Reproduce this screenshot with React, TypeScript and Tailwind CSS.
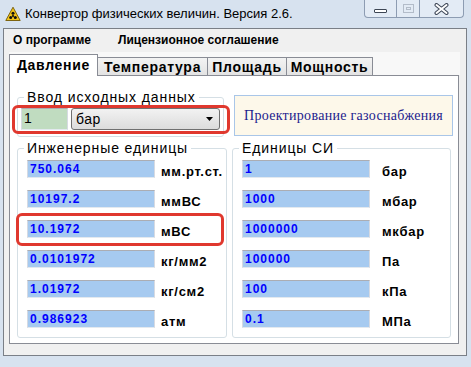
const SANS = "font-['Liberation_Sans',Arial,sans-serif]";

const engRows = [
  ["750.064", "мм.рт.ст."],
  ["10197.2", "ммВС"],
  ["10.1972", "мВС"],
  ["0.0101972", "кг/мм2"],
  ["1.01972", "кг/см2"],
  ["0.986923", "атм"],
];

const siRows = [
  ["1", "бар"],
  ["1000", "мбар"],
  ["1000000", "мкбар"],
  ["100000", "Па"],
  ["100", "кПа"],
  ["0.1", "МПа"],
];

const AppIcon = () => (
  <svg width="16" height="16" viewBox="0 0 16 16">
    <path d="M8 1.2 L15.2 14.5 L0.8 14.5 Z" fill="#f4c51a" stroke="#7d6410" strokeWidth="1" strokeLinejoin="round" />
    <circle cx="8" cy="10" r="1.1" fill="#111" />
    <circle cx="8" cy="7.3" r="1.5" fill="#111" />
    <circle cx="5.7" cy="11.5" r="1.5" fill="#111" />
    <circle cx="10.3" cy="11.5" r="1.5" fill="#111" />
  </svg>
);

const TitleButtons = () => (
  <div className="flex h-[18px] self-start rounded-b-[4px] border border-t-0 border-[#8d9cb2] bg-[#e3ebf5]">
    <div className="flex w-[32px] items-center justify-center border-r border-[#8d9cb2]">
      <div className="mt-[5px] h-[4px] w-[13px] rounded-[1px] border border-[#3d4654] bg-white" />
    </div>
    <div className="flex w-[23px] items-center justify-center border-r border-[#8d9cb2]">
      <div className="flex h-[9px] w-[11px] items-center justify-center border border-[#b3bcc9]">
        <div className="h-[3px] w-[5px] border border-[#b3bcc9]" />
      </div>
    </div>
    <div className="flex w-[43px] items-center justify-center">
      <svg width="15" height="12" viewBox="0 0 15 12">
        <path d="M2.5 2 L12.5 10 M12.5 2 L2.5 10" stroke="#3e4757" strokeWidth="4" strokeLinecap="round" />
        <path d="M2.5 2 L12.5 10 M12.5 2 L2.5 10" stroke="#ffffff" strokeWidth="2" strokeLinecap="round" />
      </svg>
    </div>
  </div>
);

const ValueBox = ({ value }: { value: string }) => (
  <div className="h-[18px] w-[128px] border border-t-[#abadb3] border-x-[#d6dae2] border-b-[#e3e9ef] bg-[#a6caf0] pl-[2px] text-[12px] font-bold leading-[16px] tracking-[1px] text-[#0000ff]">
    {value}
  </div>
);

const Group = ({ title, rows, gap, width }: { title: string; rows: string[][]; gap: string; width: string }) => (
  <fieldset className={`${width} rounded-[3px] border border-[#d5dfe5] px-[3px]`}>
    <legend className="ml-[3px] px-[3px] text-[14px] leading-[16px] tracking-[0.9px] text-black">{title}</legend>
    <div className="flex flex-col gap-[12px] pl-[6px] pt-[4px] pb-[9px]">
      {rows.map(([v, u]) => (
        <div key={u} className="flex h-[18px] items-start">
          <ValueBox value={v} />
          <span className={`${gap} pt-[4px] text-[13px] font-bold leading-[16px] tracking-[0.7px] text-black`}>{u}</span>
        </div>
      ))}
    </div>
  </fieldset>
);

const tabs = [
  { label: "Давление", w: "w-[89px]", active: true },
  { label: "Температура", w: "w-[111px]", active: false },
  { label: "Площадь", w: "w-[80px]", active: false },
  { label: "Мощность", w: "w-[87px]", active: false },
];

export default function App() {
  return (
    <div className={`${SANS} flex h-[367px] w-[471px] flex-col overflow-hidden bg-[#d7e2ef]`}>
      {/* title bar */}
      <div className="flex h-[28px] flex-shrink-0 items-center pl-[5px] pr-[7px]">
        <AppIcon />
        <span className="ml-[4px] text-[13px] text-black">Конвертор физических величин. Версия 2.6.</span>
        <div className="flex-1" />
        <TitleButtons />
      </div>

      {/* client area */}
      <div className="ml-[3px] h-[328px] w-[464px] flex-shrink-0 border border-[#7a7f87] bg-[#f0f0f0]">
        <div className="flex h-[19px] items-center gap-[27px] pl-[9px] pt-[2px] text-[12px] font-bold text-black">
          <span>О программе</span>
          <span>Лицензионное соглашение</span>
        </div>

        <div className="ml-[5px] mt-[4px] w-[451px]">
          {/* tab strip */}
          <div className="flex h-[23px] items-end bg-[#f8f8f8]">
            {tabs.map((t) =>
              t.active ? (
                <div
                  key={t.label}
                  className={`${t.w} relative z-10 -mb-px flex h-[22px] items-center justify-center border border-b-0 border-[#898c95] bg-white pb-[1px] text-[14px] font-bold tracking-[0.7px] text-black`}
                >
                  {t.label}
                </div>
              ) : (
                <div
                  key={t.label}
                  className={`${t.w} -ml-px flex h-[18px] items-center justify-center border border-b-0 border-[#898c95] bg-linear-to-b from-[#f3f3f3] to-[#e3e3e3] pt-[2px] text-[14px] font-bold tracking-[0.7px] text-black`}
                >
                  {t.label}
                </div>
              )
            )}
          </div>

          {/* tab page */}
          <div className="relative h-[269px] w-[450px] border border-[#898c95] bg-white">
            <div className="flex items-start pl-[7px] pt-[13px]">
              <fieldset className="w-[206px] rounded-[3px] border border-[#d5dfe5] px-[3px]">
                <legend className="ml-[3px] px-[3px] text-[14px] leading-[16px] tracking-[0.9px] text-black">
                  Ввод исходных данных
                </legend>
                <div className="flex gap-[3px] pb-[6px] pt-[3px]">
                  <div className="h-[22px] w-[47px] border border-t-[#abadb3] border-x-[#d6dae2] border-b-[#e3e9ef] bg-[#c0dcc0] pl-[2px] text-[14px] leading-[18px] text-black">
                    1
                  </div>
                  <div className="flex h-[22px] w-[149px] items-center justify-between rounded-[3px] border border-[#707070] bg-linear-to-b from-[#f2f2f2] to-[#dcdcdc] pl-[4px] pr-[6px] text-[14px] tracking-[0.5px] text-black">
                    <span>бар</span>
                    <svg width="7" height="4" viewBox="0 0 7 4">
                      <path d="M0 0 H7 L3.5 4 Z" fill="#000" />
                    </svg>
                  </div>
                </div>
              </fieldset>
              <div className="ml-[10px] mt-[6px] flex h-[41px] w-[219px] items-center border border-[#a9c6e8] bg-[#fdf8ea] pl-[9px] font-['Liberation_Serif','Times_New_Roman',serif] text-[14px] tracking-[0.3px] text-[#1c1c8e]">
                Проектирование газоснабжения
              </div>
            </div>

            <div className="mt-[3px] flex gap-[5px] pl-[7px]">
              <Group title="Инженерные единицы" rows={engRows} gap="ml-[6px]" width="w-[210px]" />
              <Group title="Единицы СИ" rows={siRows} gap="ml-[12px]" width="w-[219px]" />
            </div>

            {/* red annotation frames */}
            <div className="pointer-events-none absolute left-[2px] top-[29px] h-[29px] w-[218px] rounded-[6px] border-[3px] border-[#e0382e]" />
            <div className="pointer-events-none absolute left-[6px] top-[137px] h-[33px] w-[208px] rounded-[6px] border-[3px] border-[#e0382e]" />
          </div>
        </div>
      </div>
    </div>
  );
}
